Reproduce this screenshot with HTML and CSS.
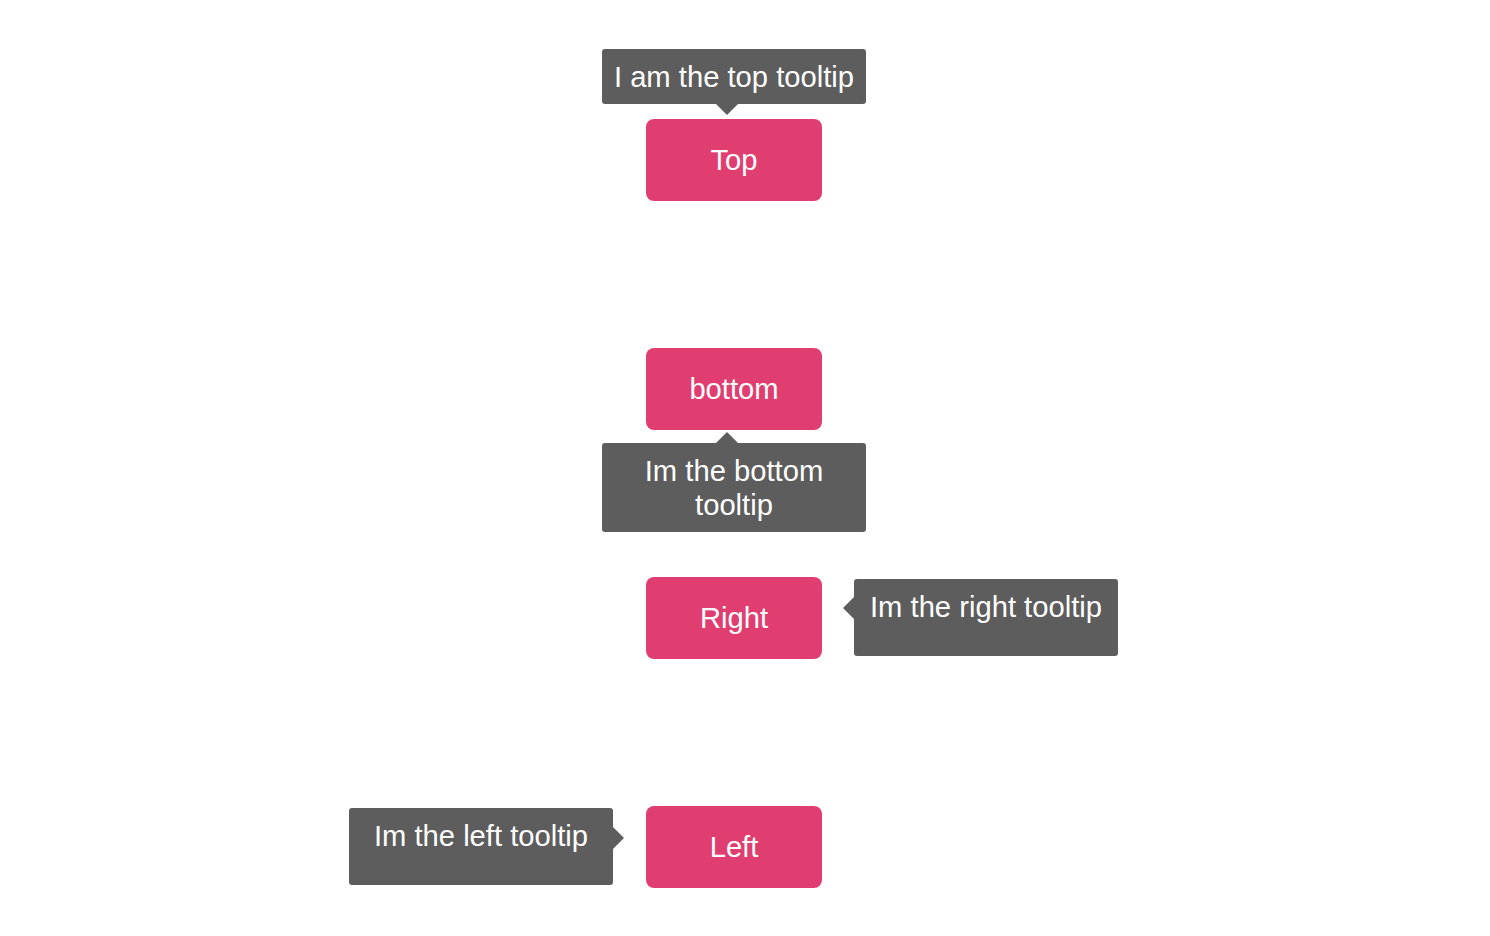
FILE: index.html
```html
<!DOCTYPE HTML>
<html>
	<head>
		<meta charset="utf-8">
		<title>Tooltips</title>
		<link rel="stylesheet" href="styles.css">
	</head>

	<body>
		<div class="list">
			<div class="tip-wrap">
				<button class="btn">Top</button>
				<span class="tooltip tooltip-top">I am the top tooltip</span>
			</div>
			<div class="tip-wrap">
				<button class="btn">bottom</button>
				<span class="tooltip tooltip-bottom">Im the bottom tooltip</span>
			</div>
			<div class="tip-wrap">
				<button class="btn">Right</button>
				<span class="tooltip tooltip-right">Im the right tooltip</span>
			</div>
			<div class="tip-wrap">
				<button class="btn">Left</button>
				<span class="tooltip tooltip-left">Im the left tooltip</span>
			</div>
		</div>
	</body>
</html>
```

FILE: styles.css
```css
body{
	margin: 0;
	background: #ffffff;
	font-family: "Liberation Sans", Arial, sans-serif;
}
.list{
	display: flex;
	flex-direction: column;
	align-items: flex-start;
	gap: 147px;
	padding-top: 119px;
	padding-left: 646px;
}
.tip-wrap{
	position: relative;
	width: 176px;
	height: 82px;
}
.btn{
	display: block;
	width: 176px;
	height: 82px;
	border: none;
	border-radius: 8px;
	background-color: #e03d71;
	color: #ffffff;
	font-family: inherit;
	font-size: 29.2px;
	padding: 0;
	cursor: pointer;
}
.tooltip{
	position: absolute;
	box-sizing: border-box;
	width: 264px;
	padding: 11px 8px 10px;
	border-radius: 3px;
	background-color: #5d5d5d;
	color: #ffffff;
	font-size: 29.2px;
	line-height: 34px;
	text-align: center;
}
.tooltip::after{
	content: "";
	position: absolute;
	border: 11px solid transparent;
}
.tooltip-top{
	bottom: calc(100% + 15px);
	left: -44px;
	white-space: nowrap;
}
.tooltip-top::after{
	top: 100%;
	left: calc(50% - 18px);
	border-top-color: #5d5d5d;
	border-bottom-width: 0;
}
.tooltip-bottom{
	top: calc(100% + 13px);
	left: -44px;
	padding: 11px 40px 10px;
}
.tooltip-bottom::after{
	bottom: 100%;
	left: calc(50% - 18px);
	border-bottom-color: #5d5d5d;
	border-top-width: 0;
}
.tooltip-right, .tooltip-left{
	top: 2px;
	height: 77px;
}
.tooltip-right{
	left: calc(100% + 32px);
}
.tooltip-right::after{
	right: 100%;
	top: 18px;
	border-right-color: #5d5d5d;
	border-left-width: 0;
}
.tooltip-left{
	right: calc(100% + 33px);
}
.tooltip-left::after{
	left: 100%;
	top: 19px;
	border-left-color: #5d5d5d;
	border-right-width: 0;
}
```
